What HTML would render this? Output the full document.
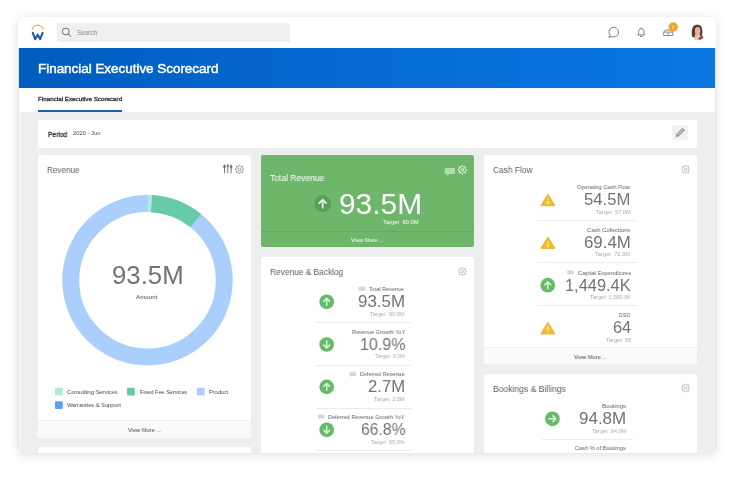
<!DOCTYPE html>
<html><head><meta charset="utf-8"><style>
html,body{margin:0;padding:0;}
body{width:740px;height:478px;position:relative;overflow:hidden;background:#fff;font-family:"Liberation Sans",sans-serif;}
.t{position:absolute;white-space:nowrap;line-height:1;font-family:"Liberation Sans",sans-serif;transform-origin:0 0;will-change:transform;}
.a{position:absolute;}
.win{position:absolute;left:18px;top:17px;width:698px;height:436px;border-radius:5px;box-shadow:0 2px 11px rgba(0,0,0,0.12),0 0 1.5px rgba(0,0,0,0.08);background:#edeef0;}
.clip{position:absolute;left:18px;top:17px;width:698px;height:436px;border-radius:5px;overflow:hidden;}
.inner{position:absolute;left:-18px;top:-17px;width:740px;height:478px;}
.card{position:absolute;background:#fff;border-radius:2px;}
.sep{position:absolute;height:1px;background:#ebeced;}
svg{position:absolute;overflow:visible;}
.root{position:absolute;left:0;top:0;width:740px;height:478px;filter:blur(0.3px);}

</style></head><body><div class="root">
<div class="win"></div>
<div class="clip"><div class="inner">
  <!-- header -->
  <div class="a" style="left:0;top:0;width:740px;height:48px;background:#fff"></div>
  <div class="a" style="left:57px;top:23px;width:233px;height:18.8px;background:#eff0f2;border-radius:2px"></div>
  <!-- banner -->
  <div class="a" style="left:0;top:48px;width:740px;height:40px;background:linear-gradient(90deg,#005cbe 0%,#056ad3 50%,#0b78e2 100%)"></div>
  <!-- tab bar -->
  <div class="a" style="left:0;top:88px;width:740px;height:24px;background:#fff"></div>
  <div class="a" style="left:38px;top:110px;width:84px;height:2px;background:#1d5fb6"></div>
  <!-- period card -->
  <div class="card" style="left:38px;top:120px;width:659px;height:28px"></div>
  <div class="a" style="left:671.5px;top:124.5px;width:16px;height:15px;background:#f0f1f2;border-radius:2px"></div>
  <!-- revenue card -->
  <div class="card" style="left:38px;top:155px;width:213px;height:283px;overflow:hidden">
    <div class="a" style="left:0;top:265px;width:213px;height:18px;background:#fafafb;border-top:1px solid #efeff0"></div>
  </div>
  <div class="card" style="left:38px;top:447px;width:213px;height:30px"></div>
  <!-- green card -->
  <div class="card" style="left:261px;top:155px;width:213px;height:92px;background:#6db66a;overflow:hidden">
    <div class="a" style="left:0;top:76px;width:213px;height:1px;background:#63a960"></div>
  </div>
  <!-- revenue & backlog -->
  <div class="card" style="left:261px;top:257px;width:213px;height:230px"></div>
  <!-- cash flow -->
  <div class="card" style="left:484px;top:155px;width:213px;height:209px;overflow:hidden">
    <div class="a" style="left:0;top:192px;width:213px;height:17px;background:#fafafb;border-top:1px solid #efeff0"></div>
  </div>
  <!-- bookings -->
  <div class="card" style="left:484px;top:374px;width:213px;height:120px"></div>

  <!-- separators col2 -->
  <div class="sep" style="left:316px;top:322px;width:95px"></div>
  <div class="sep" style="left:316px;top:365px;width:95px"></div>
  <div class="sep" style="left:316px;top:408px;width:95px"></div>
  <div class="sep" style="left:316px;top:450px;width:95px"></div>
  <!-- separators col3 -->
  <div class="sep" style="left:537px;top:220px;width:99px"></div>
  <div class="sep" style="left:537px;top:262px;width:99px"></div>
  <div class="sep" style="left:537px;top:305px;width:99px"></div>
  <div class="sep" style="left:542px;top:439px;width:91px"></div>

  <!-- donut -->
  <svg width="740" height="478" style="left:0;top:0" viewBox="0 0 740 478">
    <g transform="translate(147.5 280.3) rotate(-90)">
      <circle r="76.75" fill="none" stroke="#aacffc" stroke-width="17"/>
      <circle r="76.75" fill="none" stroke="#b2e9d9" stroke-width="17" stroke-dasharray="4.4 1000"/>
      <circle r="76.75" fill="none" stroke="#66caab" stroke-width="17" stroke-dasharray="0 4.2 48.0 1000"/>
    </g>
    <!-- legend swatches -->
    <rect x="55" y="387.8" width="7.8" height="7.8" rx="1" fill="#b2e9d9"/>
    <rect x="127" y="387.8" width="7.8" height="7.8" rx="1" fill="#66caab"/>
    <rect x="196.9" y="387.8" width="7.8" height="7.8" rx="1" fill="#aacffc"/>
    <rect x="55" y="401.3" width="7.8" height="7.8" rx="1" fill="#5ba2f2"/>
  </svg>

  <!-- icons layer -->
  <svg width="740" height="478" style="left:0;top:0" viewBox="0 0 740 478">
    <!-- logo -->
    <path d="M32.1 30.0 A5.65 5.65 0 0 1 43.3 30.0" fill="none" stroke="#f3a93c" stroke-width="1.15"/>
    <path d="M32.8 32.9 L35.2 39.2 L37.7 34.7 L40.2 39.2 L42.6 32.9" fill="none" stroke="#1f5ca8" stroke-width="2.1" stroke-linejoin="round" stroke-linecap="round"/>
    <!-- search icon -->
    <circle cx="65.75" cy="31.55" r="3.3" fill="none" stroke="#7d8084" stroke-width="1.05"/>
    <path d="M68.2 34.1 L70.8 36.3" stroke="#7d8084" stroke-width="1.05" stroke-linecap="round"/>
    <!-- chat icon -->
    <path d="M610.4 35.5 A4.8 4.8 0 1 1 612.16 36.61 L608.7 37.3 Z" fill="none" stroke="#75787c" stroke-width="0.95" stroke-linejoin="round"/>
    <!-- bell -->
    <path d="M637.6 34.9 L644.9 34.9 L643.9 33.7 L643.9 31.3 A2.65 2.65 0 0 0 638.6 31.3 L638.6 33.7 Z" fill="none" stroke="#75787c" stroke-width="0.95" stroke-linejoin="round"/>
    <path d="M640.3 36.4 L642.2 36.4" stroke="#75787c" stroke-width="1" stroke-linecap="round"/>
    <path d="M641.25 27.9 L641.25 28.6" stroke="#75787c" stroke-width="0.9" stroke-linecap="round"/>
    <!-- inbox -->
    <path d="M663.7 35.5 L663.7 32.1 L665.5 30.0 L671.1 30.0 L672.8 32.1 L672.8 35.5 Z M663.7 32.1 L672.8 32.1" fill="none" stroke="#7a7d81" stroke-width="0.9" stroke-linejoin="round"/>
    <path d="M667.2 33.8 L669.4 33.8" stroke="#7a7d81" stroke-width="0.9"/>
    <circle cx="673.2" cy="27.0" r="4.7" fill="#f4a236"/>
    <path d="M672.6 25.2 L673.6 25.2 L673.6 28.7 L672.6 28.7 Z" fill="#fde6c0" opacity="0.8"/>
    <!-- avatar -->
    <g>
      <path d="M692.0 36.8 C691.5 32.5 691.6 28.3 693.3 26.2 C695.0 24.1 699.8 24.0 701.3 26.6 C702.8 29.2 702.5 33.4 701.9 36.6 L699.5 37.2 L694.5 37.6 Z" fill="#553a30"/>
      <ellipse cx="697.6" cy="30.9" rx="2.8" ry="4.0" fill="#deb6a0"/>
      <path d="M695.0 34.2 L700.0 34.2 L701.0 39.8 L694.4 39.8 Z" fill="#e3bfad"/>
      <path d="M698.6 38.0 L703.0 35.8 L703.2 38.2 L700.2 39.8 L698.6 39.8 Z" fill="#9c3556"/>
    </g>
    <!-- pencil -->
    <path d="M676.3 136.5 L676.9 133.9 L682.6 128.2 L684.5 130.1 L678.8 135.8 Z" fill="#b9babc" stroke="#76787b" stroke-width="0.8" stroke-linejoin="round"/>
    <!-- revenue filter icon -->
    <g fill="#6e7175">
      <rect x="224.0" y="164.6" width="0.95" height="8.7"/>
      <rect x="227.3" y="164.6" width="0.95" height="8.7"/>
      <rect x="230.6" y="164.6" width="0.95" height="8.7"/>
      <ellipse cx="224.5" cy="166.6" rx="1.3" ry="1.75"/>
      <ellipse cx="227.8" cy="165.9" rx="1.05" ry="1.3"/>
      <ellipse cx="231.1" cy="167.0" rx="1.3" ry="1.65"/>
    </g>
  </svg>
<svg width="740" height="478" style="left:0;top:0" viewBox="0 0 740 478"><path d="M239.40 164.90 L240.54 166.54 L242.51 166.19 L242.16 168.16 L243.80 169.30 L242.16 170.44 L242.51 172.41 L240.54 172.06 L239.40 173.70 L238.26 172.06 L236.29 172.41 L236.64 170.44 L235.00 169.30 L236.64 168.16 L236.29 166.19 L238.26 166.54 Z" fill="none" stroke="#808387" stroke-width="0.75" stroke-linejoin="miter" stroke-miterlimit="10"/><circle cx="239.4" cy="169.3" r="1.32" fill="none" stroke="#808387" stroke-width="0.75"/><path d="M462.30 165.50 L463.44 167.14 L465.41 166.79 L465.06 168.76 L466.70 169.90 L465.06 171.04 L465.41 173.01 L463.44 172.66 L462.30 174.30 L461.16 172.66 L459.19 173.01 L459.54 171.04 L457.90 169.90 L459.54 168.76 L459.19 166.79 L461.16 167.14 Z" fill="none" stroke="#ffffff" stroke-width="0.8" stroke-linejoin="miter" stroke-miterlimit="10"/><circle cx="462.3" cy="169.9" r="1.32" fill="none" stroke="#ffffff" stroke-width="0.8"/><path d="M462.30 267.20 L463.42 268.80 L465.34 268.46 L465.00 270.38 L466.60 271.50 L465.00 272.62 L465.34 274.54 L463.42 274.20 L462.30 275.80 L461.18 274.20 L459.26 274.54 L459.60 272.62 L458.00 271.50 L459.60 270.38 L459.26 268.46 L461.18 268.80 Z" fill="none" stroke="#a7aaad" stroke-width="0.7" stroke-linejoin="miter" stroke-miterlimit="10"/><circle cx="462.3" cy="271.5" r="1.29" fill="none" stroke="#a7aaad" stroke-width="0.7"/><path d="M685.60 165.10 L686.72 166.70 L688.64 166.36 L688.30 168.28 L689.90 169.40 L688.30 170.52 L688.64 172.44 L686.72 172.10 L685.60 173.70 L684.48 172.10 L682.56 172.44 L682.90 170.52 L681.30 169.40 L682.90 168.28 L682.56 166.36 L684.48 166.70 Z" fill="none" stroke="#a7aaad" stroke-width="0.7" stroke-linejoin="miter" stroke-miterlimit="10"/><circle cx="685.6" cy="169.4" r="1.29" fill="none" stroke="#a7aaad" stroke-width="0.7"/><path d="M685.60 383.80 L686.72 385.40 L688.64 385.06 L688.30 386.98 L689.90 388.10 L688.30 389.22 L688.64 391.14 L686.72 390.80 L685.60 392.40 L684.48 390.80 L682.56 391.14 L682.90 389.22 L681.30 388.10 L682.90 386.98 L682.56 385.06 L684.48 385.40 Z" fill="none" stroke="#a7aaad" stroke-width="0.7" stroke-linejoin="miter" stroke-miterlimit="10"/><circle cx="685.6" cy="388.1" r="1.29" fill="none" stroke="#a7aaad" stroke-width="0.7"/><circle cx="322.7" cy="203.7" r="8.5" fill="#5a9f58"/><path d="M322.70 207.72 L322.70 199.68 M319.32 203.06 L322.70 199.68 L326.08 203.06" fill="none" stroke="#e9f4e8" stroke-width="1.6883561643835616" stroke-linecap="round" stroke-linejoin="round"/><circle cx="326.7" cy="301.8" r="7.35" fill="#66bb6a"/><path d="M326.70 305.27 L326.70 298.33 M323.78 301.25 L326.70 298.33 L329.62 301.25" fill="none" stroke="#e6f4e6" stroke-width="1.459931506849315" stroke-linecap="round" stroke-linejoin="round"/><circle cx="326.7" cy="344.5" r="7.35" fill="#66bb6a"/><path d="M326.70 341.03 L326.70 347.97 M323.78 345.05 L326.70 347.97 L329.62 345.05" fill="none" stroke="#e6f4e6" stroke-width="1.459931506849315" stroke-linecap="round" stroke-linejoin="round"/><circle cx="326.7" cy="386.9" r="7.35" fill="#66bb6a"/><path d="M326.70 390.37 L326.70 383.43 M323.78 386.35 L326.70 383.43 L329.62 386.35" fill="none" stroke="#e6f4e6" stroke-width="1.459931506849315" stroke-linecap="round" stroke-linejoin="round"/><circle cx="326.7" cy="429.8" r="7.35" fill="#66bb6a"/><path d="M326.70 426.33 L326.70 433.27 M323.78 430.35 L326.70 433.27 L329.62 430.35" fill="none" stroke="#e6f4e6" stroke-width="1.459931506849315" stroke-linecap="round" stroke-linejoin="round"/><path d="M547.9 194.2 L555.0 205.7 L540.8 205.7 Z" fill="#efb830" stroke="#efb830" stroke-width="1.0" stroke-linejoin="round"/><path d="M547.90 198.57 L547.90 204.09 M545.60 201.79 L547.90 204.09 L550.20 201.79" fill="none" stroke="#fbe3a0" stroke-width="1.0" stroke-linecap="round" stroke-linejoin="round"/><path d="M547.9 237.1 L555.0 248.4 L540.8 248.4 Z" fill="#efb830" stroke="#efb830" stroke-width="1.0" stroke-linejoin="round"/><path d="M547.90 241.39 L547.90 246.82 M545.64 244.56 L547.90 246.82 L550.16 244.56" fill="none" stroke="#fbe3a0" stroke-width="1.0" stroke-linecap="round" stroke-linejoin="round"/><circle cx="547.8" cy="285.2" r="7.35" fill="#66bb6a"/><path d="M547.80 288.67 L547.80 281.73 M544.88 284.65 L547.80 281.73 L550.72 284.65" fill="none" stroke="#e6f4e6" stroke-width="1.459931506849315" stroke-linecap="round" stroke-linejoin="round"/><path d="M547.9 322.3 L555.0 333.9 L540.8 333.9 Z" fill="#efb830" stroke="#efb830" stroke-width="1.0" stroke-linejoin="round"/><path d="M547.90 332.28 L547.90 326.71 M545.58 329.03 L547.90 326.71 L550.22 329.03" fill="none" stroke="#fbe3a0" stroke-width="1.0" stroke-linecap="round" stroke-linejoin="round"/><circle cx="552.4" cy="418.8" r="7.35" fill="#66bb6a"/><path d="M548.93 418.80 L555.87 418.80 M552.95 415.88 L555.87 418.80 L552.95 421.72" fill="none" stroke="#e6f4e6" stroke-width="1.459931506849315" stroke-linecap="round" stroke-linejoin="round"/><rect x="444.70" y="168.00" width="10.30" height="6.08" rx="0.5" fill="#b2deaf"/><path d="M446.76 173.93 L446.76 175.60 L449.33 173.93 Z" fill="#b2deaf"/><rect x="358.50" y="286.80" width="6.80" height="3.84" rx="0.5" fill="#d6d7d9"/><path d="M359.86 290.54 L359.86 291.60 L361.56 290.54 Z" fill="#d6d7d9"/><rect x="349.30" y="372.20" width="6.80" height="3.84" rx="0.5" fill="#d6d7d9"/><path d="M350.66 375.94 L350.66 377.00 L352.36 375.94 Z" fill="#d6d7d9"/><rect x="317.80" y="414.60" width="6.80" height="3.84" rx="0.5" fill="#d6d7d9"/><path d="M319.16 418.34 L319.16 419.40 L320.86 418.34 Z" fill="#d6d7d9"/><rect x="567.20" y="270.40" width="6.70" height="3.84" rx="0.5" fill="#d6d7d9"/><path d="M568.54 274.14 L568.54 275.20 L570.22 274.14 Z" fill="#d6d7d9"/></svg><div class='t' style='left:76.70px;top:29.80px;font-size:6.7px;color:#87898d;transform:scaleX(0.9455);'>Search</div><div class='t' style='left:37.74px;top:62.60px;font-size:12.7px;color:#ffffff;transform:scaleX(1.0572);-webkit-text-stroke:0.45px #fff;'>Financial Executive Scorecard</div><div class='t' style='left:38.00px;top:97.10px;font-size:5.8px;color:#333333;transform:scaleX(1.0791);-webkit-text-stroke:0.3px #333;'>Financial Executive Scorecard</div><div class='t' style='left:47.60px;top:131.70px;font-size:6.9px;color:#3a3a3a;transform:scaleX(0.9658);-webkit-text-stroke:0.3px #3a3a3a;'>Period</div><div class='t' style='left:73.10px;top:130.80px;font-size:5.8px;color:#4a4a4a;transform:scaleX(0.9938);'>2020 - Jun</div><div class='t' style='left:46.70px;top:165.80px;font-size:9.1px;color:#5b5e62;transform:scaleX(0.8942);'>Revenue</div><div class='t' style='left:111.87px;top:263.20px;font-size:25.0px;color:#6f7479;transform:scaleX(1.0306);'>93.5M</div><div class='t' style='left:136.10px;top:294.90px;font-size:5.9px;color:#4a4a4a;transform:scaleX(1.0550);'>Amount</div><div class='t' style='left:67.00px;top:388.80px;font-size:6.2px;color:#4a4a4a;transform:scaleX(0.9251);'>Consulting Services</div><div class='t' style='left:139.50px;top:388.80px;font-size:6.2px;color:#4a4a4a;transform:scaleX(0.8948);'>Fixed Fee Services</div><div class='t' style='left:208.90px;top:388.80px;font-size:6.2px;color:#4a4a4a;transform:scaleX(0.9118);'>Product</div><div class='t' style='left:67.00px;top:402.20px;font-size:6.2px;color:#4a4a4a;transform:scaleX(0.9138);'>Warranties &amp; Support</div><div class='t' style='left:127.80px;top:427.00px;font-size:6.2px;color:#4a4a4a;transform:scaleX(0.9180);'>View More ...</div><div class='t' style='left:270.00px;top:173.50px;font-size:9.1px;color:#ffffff;transform:scaleX(0.9349);'>Total Revenue</div><div class='t' style='left:338.96px;top:189.70px;font-size:28.6px;color:#ffffff;transform:scaleX(1.0450);'>93.5M</div><div class='t' style='left:382.90px;top:220.00px;font-size:5.7px;color:#ffffff;transform:scaleX(1.0275);'>Target&nbsp;&nbsp;90.0M</div><div class='t' style='left:350.80px;top:237.10px;font-size:6.2px;color:#ffffff;transform:scaleX(0.9153);'>View More ...</div><div class='t' style='left:270.00px;top:268.30px;font-size:9.1px;color:#5b5e62;transform:scaleX(0.9171);'>Revenue &amp; Backlog</div><div class='t' style='left:369.30px;top:285.90px;font-size:6.1px;color:#5f6266;transform:scaleX(0.8972);'>Total Revenue</div><div class='t' style='left:358.00px;top:293.00px;font-size:16.4px;color:#6f7479;transform:scaleX(1.0334);'>93.5M</div><div class='t' style='left:370.30px;top:311.50px;font-size:5.7px;color:#a8abae;transform:scaleX(0.9847);'>Target&nbsp;&nbsp;90.0M</div><div class='t' style='left:351.60px;top:328.80px;font-size:6.1px;color:#5f6266;transform:scaleX(0.9123);'>Revenue Growth YoY</div><div class='t' style='left:359.82px;top:335.50px;font-size:16.4px;color:#6f7479;transform:scaleX(0.9799);'>10.9%</div><div class='t' style='left:374.60px;top:354.00px;font-size:5.7px;color:#a8abae;transform:scaleX(0.9475);'>Target&nbsp;&nbsp;9.0%</div><div class='t' style='left:359.70px;top:371.20px;font-size:6.1px;color:#5f6266;transform:scaleX(0.8947);'>Deferred Revenue</div><div class='t' style='left:367.90px;top:378.20px;font-size:16.4px;color:#6f7479;transform:scaleX(1.0200);'>2.7M</div><div class='t' style='left:373.80px;top:396.70px;font-size:5.7px;color:#a8abae;transform:scaleX(0.9726);'>Target&nbsp;&nbsp;2.5M</div><div class='t' style='left:328.20px;top:413.80px;font-size:6.1px;color:#5f6266;transform:scaleX(0.9150);'>Deferred Revenue Growth YoY</div><div class='t' style='left:360.80px;top:420.80px;font-size:16.4px;color:#6f7479;transform:scaleX(0.9586);'>66.8%</div><div class='t' style='left:371.40px;top:439.60px;font-size:5.7px;color:#a8abae;transform:scaleX(0.9533);'>Target&nbsp;&nbsp;65.0%</div><div class='t' style='left:492.90px;top:166.00px;font-size:9.1px;color:#5b5e62;transform:scaleX(0.9196);'>Cash Flow</div><div class='t' style='left:577.30px;top:184.10px;font-size:6.1px;color:#5f6266;transform:scaleX(0.9250);'>Operating Cash Flow</div><div class='t' style='left:584.00px;top:190.80px;font-size:16.4px;color:#6f7479;transform:scaleX(1.0178);'>54.5M</div><div class='t' style='left:595.70px;top:209.50px;font-size:5.7px;color:#a8abae;transform:scaleX(0.9933);'>Target&nbsp;&nbsp;57.0M</div><div class='t' style='left:587.20px;top:226.90px;font-size:6.1px;color:#5f6266;transform:scaleX(0.9436);'>Cash Collections</div><div class='t' style='left:583.50px;top:233.90px;font-size:16.4px;color:#6f7479;transform:scaleX(1.0267);'>69.4M</div><div class='t' style='left:595.40px;top:252.40px;font-size:5.7px;color:#a8abae;transform:scaleX(1.0104);'>Target&nbsp;&nbsp;72.0M</div><div class='t' style='left:577.60px;top:269.60px;font-size:6.1px;color:#5f6266;transform:scaleX(0.9469);'>Capital Expenditures</div><div class='t' style='left:564.71px;top:277.00px;font-size:16.4px;color:#6f7479;transform:scaleX(0.9925);'>1,449.4K</div><div class='t' style='left:589.50px;top:294.90px;font-size:5.7px;color:#a8abae;transform:scaleX(0.9847);'>Target&nbsp;&nbsp;1,500.0K</div><div class='t' style='left:619.20px;top:312.10px;font-size:6.1px;color:#5f6266;transform:scaleX(0.8615);'>DSO</div><div class='t' style='left:612.50px;top:319.00px;font-size:16.4px;color:#6f7479;transform:scaleX(0.9826);'>64</div><div class='t' style='left:605.80px;top:337.60px;font-size:5.7px;color:#a8abae;transform:scaleX(0.9949);'>Target&nbsp;&nbsp;55</div><div class='t' style='left:573.90px;top:353.70px;font-size:6.2px;color:#4a4a4a;transform:scaleX(0.9208);'>View More ...</div><div class='t' style='left:492.90px;top:384.80px;font-size:9.1px;color:#5b5e62;transform:scaleX(0.9423);'>Bookings &amp; Billings</div><div class='t' style='left:602.20px;top:402.60px;font-size:6.1px;color:#5f6266;transform:scaleX(0.9512);'>Bookings</div><div class='t' style='left:578.90px;top:409.50px;font-size:16.4px;color:#6f7479;transform:scaleX(1.0356);'>94.8M</div><div class='t' style='left:591.50px;top:428.50px;font-size:5.7px;color:#a8abae;transform:scaleX(0.9847);'>Target&nbsp;&nbsp;94.0M</div><div class='t' style='left:575.10px;top:446.30px;font-size:5.9px;color:#5f6266;transform:scaleX(0.9586);'>Cash % of Bookings</div><!-- edge strips --><div class="a" style="left:18px;top:48px;width:1px;height:405px;background:#e4e5e7"></div><div class="a" style="left:19px;top:112px;width:1.5px;height:341px;background:#f3f4f5"></div><div class="a" style="left:715px;top:48px;width:1px;height:405px;background:#e4e5e7"></div><div class="a" style="left:713.5px;top:112px;width:1.5px;height:341px;background:#f3f4f5"></div></div></div>
</div></body></html>
